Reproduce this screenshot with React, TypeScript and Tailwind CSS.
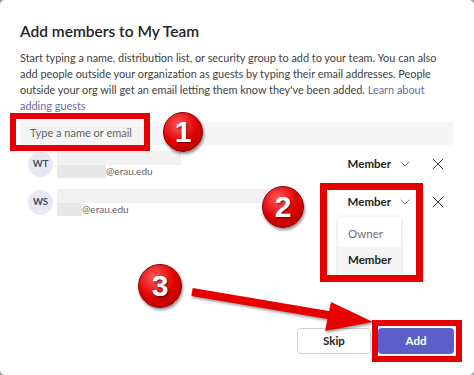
import { ChevronDown, X } from "lucide-react";

type Member = {
  initials: string;
  nameWidth: number;
  prefixWidth: number;
};

const members: Member[] = [
  { initials: "WT", nameWidth: 124, prefixWidth: 49 },
  { initials: "WS", nameWidth: 211, prefixWidth: 25 },
];

function Badge({ n, className }: { n: number; className: string }) {
  return (
    <div
      className={`absolute flex items-center justify-center rounded-full border border-[#8a0000] bg-[radial-gradient(circle_at_38%_30%,#ff5b5b,#e00000_50%,#a30000)] shadow-[1px_2px_3px_rgba(0,0,0,0.45)] ${className}`}
    >
      <span className="font-['Liberation_Sans',sans-serif] text-[30px] font-bold leading-none text-white [text-shadow:1px_1px_2px_rgba(60,0,0,0.8)]">
        {n}
      </span>
    </div>
  );
}

function MemberRow({ member }: { member: Member }) {
  return (
    <div className="flex h-[38px] items-center pl-2 pr-[6px]">
      <div className="flex h-[25px] w-[25px] shrink-0 items-center justify-center rounded-full bg-[#e8e8f4] text-[9.5px] font-bold text-[#4a4a5a]">
        {member.initials}
      </div>

      <div className="ml-[4px] flex flex-col">
        <div
          className="h-[14px] bg-[#f1f1f1]"
          style={{ width: member.nameWidth }}
        />
        <div className="flex h-[13px] items-center">
          <div
            className="h-[13px] bg-[#e7e7e7]"
            style={{ width: member.prefixWidth }}
          />
          <span className="text-[10px] leading-none text-[#616161]">
            @erau.edu
          </span>
        </div>
      </div>

      <div className="ml-auto flex items-center">
        <span className="text-[11.5px] font-bold text-[#242424]">
          Member
        </span>
        <ChevronDown
          size={16}
          strokeWidth={1.2}
          className="ml-[6px] text-[#616161]"
        />
        <X
          size={20}
          strokeWidth={1.2}
          className="ml-[15px] text-[#424242]"
        />
      </div>
    </div>
  );
}

export default function App() {
  return (
    <div className="relative h-[375px] w-[474px] overflow-hidden bg-[#9b9b9b] font-['Lato',sans-serif]">
      <div className="flex h-full w-full flex-col rounded-[5px] bg-white px-5 pt-[21px] pb-[21px]">
        <h2 className="text-[15.5px] font-semibold leading-5 text-[#242424]">
          Add members to My Team
        </h2>

        <div className="mt-[9px] text-[10.9px] leading-[16px] whitespace-nowrap text-[#424242]">
          <p>
            Start typing a name, distribution list, or security group to add
            to your team. You can also
          </p>
          <p>
            add people outside your organization as guests by typing their
            email addresses. People
          </p>
          <p>
            outside your org will get an email letting them know they've been
            added. <span className="text-[#6b6ca8]">Learn about</span>
          </p>
          <p className="text-[#6b6ca8]">adding guests</p>
        </div>

        <div className="mt-2 flex h-[23px] w-[433px] items-center rounded-[3px] bg-[#f5f5f5] pl-[10px]">
          <span className="text-[11px] text-[#616161]">
            Type a name or email
          </span>
        </div>

        {members.map((m) => (
          <MemberRow key={m.initials} member={m} />
        ))}

        <div className="mt-auto flex justify-end gap-[7px]">
          <button
            type="button"
            className="h-[26px] w-[74px] rounded-[4px] border border-[#d1d1d1] bg-white text-[11.5px] font-bold text-[#242424]"
          >
            Skip
          </button>
          <button
            type="button"
            className="h-[26px] w-[76px] rounded-[4px] bg-[#5b5fc7] text-[11.5px] font-bold text-white"
          >
            Add
          </button>
        </div>
      </div>

      {/* role dropdown */}
      <div className="absolute left-[338px] top-[217px] flex w-[63px] flex-col rounded-[3px] bg-white py-[4px] shadow-[0_1px_4px_rgba(0,0,0,0.18)]">
        <div className="flex h-[26px] items-center pl-[10px] text-[11.5px] text-[#707070]">
          Owner
        </div>
        <div className="flex h-[26px] items-center bg-[#f5f5f5] pl-[10px] text-[11.5px] font-bold text-[#242424]">
          Member
        </div>
      </div>

      {/* annotations */}
      <div className="absolute left-[10px] top-[113px] h-[38px] w-[140px] border-[6px] border-[#e60000]" />
      <div className="absolute left-[320px] top-[183px] h-[99px] w-[103px] border-[7px] border-[#e60000]" />
      <div className="absolute left-[372px] top-[320px] h-[42px] w-[90px] border-[6px] border-[#e60000]" />

      <svg
        className="pointer-events-none absolute inset-0 drop-shadow-[1px_2px_1px_rgba(0,0,0,0.35)]"
        width={474}
        height={375}
        viewBox="0 0 474 375"
      >
        <line
          x1={192}
          y1={292}
          x2={334}
          y2={316}
          stroke="#e60000"
          strokeWidth={8}
        />
        <polygon points="331,302 325,331 373,322" fill="#e60000" />
      </svg>

      <Badge n={1} className="left-[163px] top-[112px] h-[40px] w-[40px]" />
      <Badge n={2} className="left-[262px] top-[186px] h-[42px] w-[42px]" />
      <Badge n={3} className="left-[138px] top-[264px] h-[44px] w-[44px]" />
    </div>
  );
}
